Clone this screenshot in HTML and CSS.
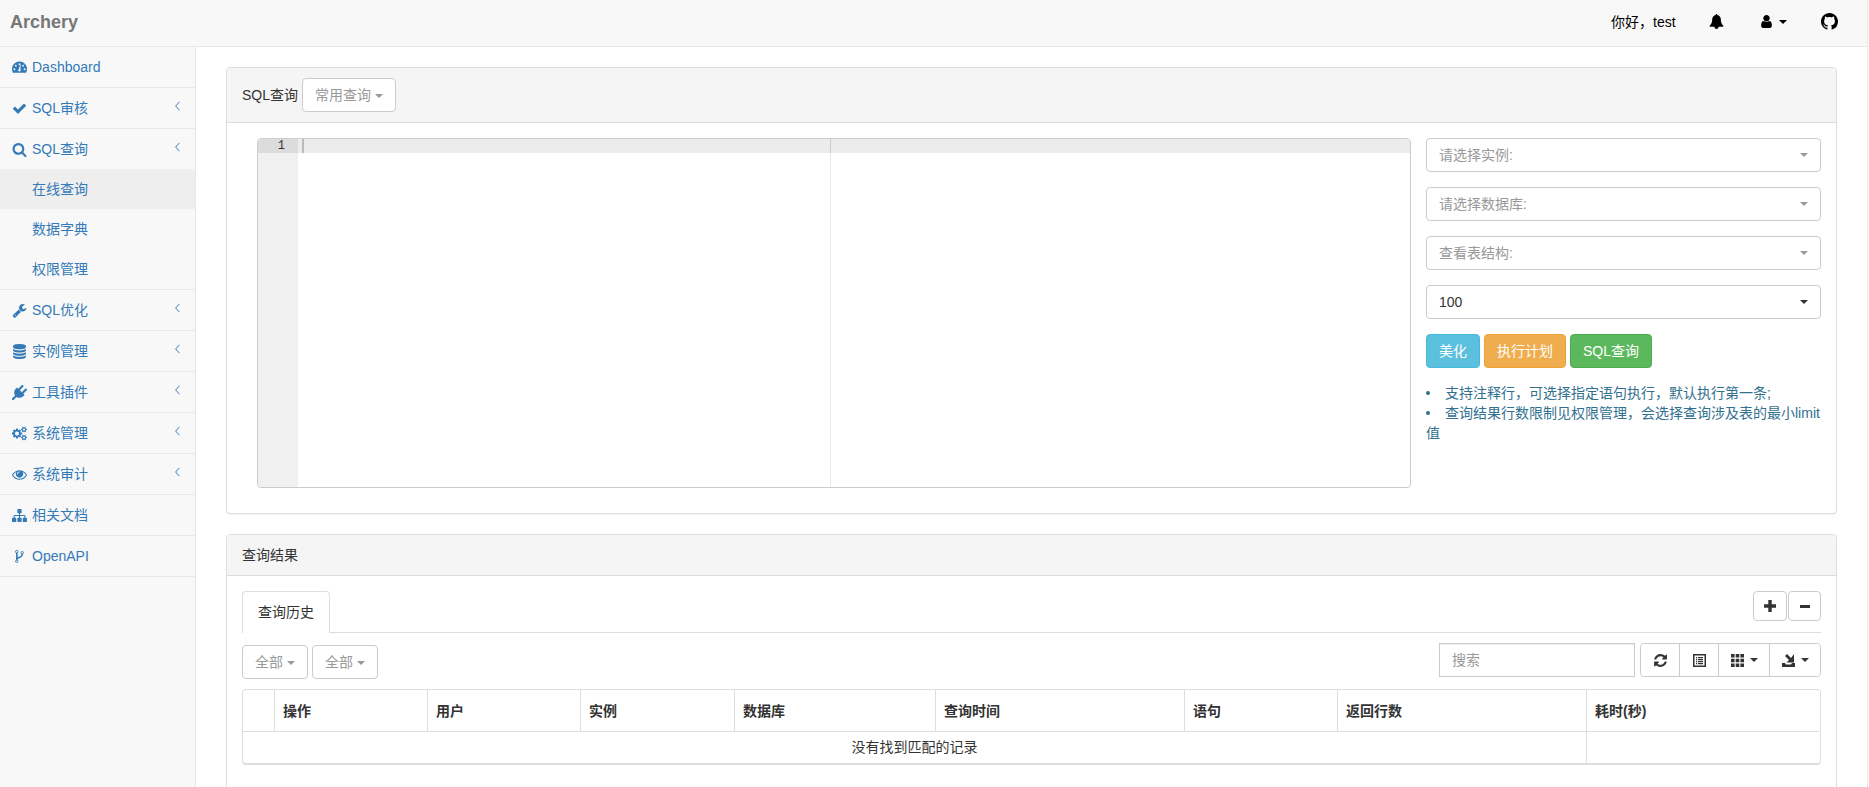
FILE: index.html
```html
<!DOCTYPE html>
<html lang="zh">
<head>
<meta charset="utf-8">
<title>Archery</title>
<link rel="stylesheet" href="styles.css">
</head>
<body>
<svg class="defs" width="0" height="0">
  <symbol id="i-dashboard" viewBox="0 0 1792 1792"><path d="M896 192q-244 0-450 120T120 638 0 1088q0 213 90 400l40 48h1532l40-48q90-187 90-400 0-244-120-450t-326-326-450-120zM288 1216a112 112 0 1 1 0-224 112 112 0 0 1 0 224zm168-432a112 112 0 1 1 0-224 112 112 0 0 1 0 224zm440-176a112 112 0 1 1 0-224 112 112 0 0 1 0 224zm110 520q40 30 40 90a150 150 0 1 1-210-137l120-470 q10-40 50-30 40 10 30 50zm330-344a112 112 0 1 1 0-224 112 112 0 0 1 0 224zm168 432a112 112 0 1 1 0-224 112 112 0 0 1 0 224z"/></symbol>
  <symbol id="i-check" viewBox="0 0 1792 1792"><path d="M1671 566q0 40-28 68l-724 724-136 136q-28 28-68 28t-68-28l-136-136-362-362q-28-28-28-68t28-68l136-136q28-28 68-28t68 28l294 295 656-657q28-28 68-28t68 28l136 136q28 28 28 68z"/></symbol>
  <symbol id="i-search" viewBox="0 0 1792 1792"><path d="M1216 832q0-185-131.500-316.500T768 384 451.500 515.500 320 832t131.500 316.500T768 1280t316.500-131.500T1216 832zm512 832q0 52-38 90t-90 38q-54 0-90-38l-343-342q-179 124-399 124-143 0-273.500-55.500t-225-150-150-225T64 832t55.500-273.500 150-225 225-150T768 128t273.500 55.500 225 150 150 225T1472 832q0 220-124 399l343 343q37 37 37 90z"/></symbol>
  <symbol id="i-wrench" viewBox="0 0 1792 1792"><path d="M448 1472q0-26-19-45t-45-19-45 19-19 45 19 45 45 19 45-19 19-45zm644-420l-682 682q-37 37-90 37-52 0-91-37l-106-108q-38-36-38-90 0-53 38-91l681-681q39 98 114.500 173.500T1092 1052zm634-435q0 39-23 106-47 134-164.500 217.500T1279 1024q-185 0-316.500-131.500T831 576t131.500-316.500T1279 128q58 0 121.500 16.500T1508 191q16 11 16 28t-16 28l-293 169v224l193 107q5-3 79-48.500t135.500-81T1692 582q15 0 23.500 10t8.500 25z"/></symbol>
  <symbol id="i-database" viewBox="0 0 1792 1792"><path d="M896 768q237 0 443-43t325-127v170q0 69-103 128t-280 93.500-385 34.500-385-34.500T231 896 128 768V598q119 84 325 127t443 43zm0 768q237 0 443-43t325-127v170q0 69-103 128t-280 93.500-385 34.500-385-34.500-280-93.500-103-128v-170q119 84 325 127t443 43zm0-384q237 0 443-43t325-127v170q0 69-103 128t-280 93.500-385 34.500-385-34.500-280-93.500-103-128V982q119 84 325 127t443 43zM896 0q208 0 385 34.500t280 93.500 103 128v128q0 69-103 128t-280 93.500T896 640t-385-34.500T231 512 128 384V256q0-69 103-128t280-93.500T896 0z"/></symbol>
  <symbol id="i-plug" viewBox="0 0 1792 1792"><path d="M1755 453q37 38 37 90.500t-37 90.500l-401 400 150 150-160 160q-163 163-389.500 186.500T543 1430l-362 362H0v-181l362-362q-124-185-100.500-411.500T448 448l160-160 150 150 400-401q38-37 91-37t90 37 37 90.500-37 90.500L939 619l234 234 401-400q38-37 91-37t90 37z"/></symbol>
  <symbol id="i-cogs" viewBox="0 0 1920 1792"><path d="M896 896q0-106-75-181t-181-75-181 75-75 181 75 181 181 75 181-75 75-181zm768 512q0-52-38-90t-90-38-90 38-38 90q0 53 37.500 90.500T1536 1536t90.500-37.500 37.500-90.500zm0-1024q0-52-38-90t-90-38-90 38-38 90q0 53 37.500 90.500T1536 512t90.500-37.500T1664 384zm-384 421v185q0 10-7 19.500t-16 10.500l-155 24q-11 35-32 76 34 48 90 115 7 11 7 20 0 12-7 19-23 30-82.500 89.500T999 1423q-11 0-21-7l-115-90q-37 19-77 31-11 108-23 155-7 24-30 24H547q-11 0-20-7.500t-10-17.500l-23-153q-34-10-75-31l-118 89q-7 7-20 7-11 0-21-8-144-133-144-160 0-9 7-19 10-14 41-53t47-61q-23-44-35-82l-152-24q-10-1-17-9.500T0 987V802q0-10 7-19.500T23 772l155-24q11-35 32-76-34-48-90-115-7-11-7-20 0-12 7-20 22-30 82-89t79-59q11 0 21 7l115 90q34-18 77-32 11-108 23-154 7-24 30-24h186q11 0 20 7.500t10 17.500l23 153q34 10 75 31l118-89q8-7 20-7 11 0 21 8 144 133 144 160 0 8-7 19-12 16-42 54t-45 60q23 48 34 82l152 23q10 2 17 10.500t7 19.500zm640 533v140q0 16-149 31-12 27-30 52 51 113 51 138 0 4-4 7-122 71-124 71-8 0-46-47t-52-68q-20 2-30 2t-30-2q-14 21-52 68t-46 47q-2 0-124-71-4-3-4-7 0-25 51-138-18-25-30-52-149-15-149-31v-140q0-16 149-31 13-29 30-52-51-113-51-138 0-4 4-7 4-2 35-20t59-34 30-16q8 0 46 46.500t52 67.500q20-2 30-2t30 2q51-71 92-112l6-2q4 0 124 70 4 3 4 7 0 25-51 138 17 23 30 52 149 15 149 31zm0-1024v140q0 16-149 31-12 27-30 52 51 113 51 138 0 4-4 7-122 71-124 71-8 0-46-47t-52-68q-20 2-30 2t-30-2q-14 21-52 68t-46 47q-2 0-124-71-4-3-4-7 0-25 51-138-18-25-30-52-149-15-149-31V314q0-16 149-31 13-29 30-52-51-113-51-138 0-4 4-7 4-2 35-20t59-34 30-16q8 0 46 46.500t52 67.500q20-2 30-2t30 2q51-71 92-112l6-2q4 0 124 70 4 3 4 7 0 25-51 138 17 23 30 52 149 15 149 31z"/></symbol>
  <symbol id="i-eye" viewBox="0 0 1792 1792"><path d="M1664 960q-152-236-381-353 61 104 61 225 0 185-131.500 316.500T896 1280t-316.500-131.500T448 832q0-121 61-225-229 117-381 353 133 205 333.500 326.500T896 1408t434.500-121.500T1664 960zM944 576q0-20-14-34t-34-14q-125 0-214.500 89.500T592 832q0 20 14 34t34 14 34-14 14-34q0-86 61-147t147-61q20 0 34-14t14-34zm848 384q0 34-20 69-140 230-376.500 368.500T896 1536t-499.500-139T20 1029q-20-35-20-69t20-69q140-229 376.500-368T896 384t499.500 139T1772 891q20 35 20 69z"/></symbol>
  <symbol id="i-sitemap" viewBox="0 0 1792 1792"><path d="M1792 1248v320q0 40-28 68t-68 28h-320q-40 0-68-28t-28-68v-320q0-40 28-68t68-28h96v-192H960v192h96q40 0 68 28t28 68v320q0 40-28 68t-68 28H736q-40 0-68-28t-28-68v-320q0-40 28-68t68-28h96V960H320v192h96q40 0 68 28t28 68v320q0 40-28 68t-68 28H96q-40 0-68-28t-28-68v-320q0-40 28-68t68-28h96V960q0-52 38-90t90-38h512V640h-96q-40 0-68-28t-28-68V224q0-40 28-68t68-28h320q40 0 68 28t28 68v320q0 40-28 68t-68 28h-96v192h512q52 0 90 38t38 90v192h96q40 0 68 28t28 68z"/></symbol>
  <symbol id="i-fork" viewBox="0 0 1792 1792"><path d="M672 1472q0-40-28-68t-68-28-68 28-28 68 28 68 68 28 68-28 28-68zm0-1152q0-40-28-68t-68-28-68 28-28 68 28 68 68 28 68-28 28-68zm640 128q0-40-28-68t-68-28-68 28-28 68 28 68 68 28 68-28 28-68zm96 0q0 52-26 96.500T1312 614q-2 287-226 414-67 38-203 81-128 40-169.500 71T672 1280v26q45 26 70.500 70.500T768 1472q0 80-56 136t-136 56-136-56-56-136q0-52 26-96.500t70-70.500V486q-45-26-70.500-70.500T384 320q0-80 56-136t136-56 136 56 56 136q0 52-26 96.500T672 486v497q54-26 154-57 55-17 87.500-29.500t70.500-31 59-39.500 40.500-51 28-69.500 8.500-91.500q-45-26-70.500-70.500T1024 448q0-80 56-136t136-56 136 56 56 136z"/></symbol>
  <symbol id="i-bell" viewBox="0 0 1792 1792"><path d="M1664 1344q0 52-38 90t-90 38h-448q0 106-75 181t-181 75-181-75-75-181H128q-52 0-90-38T0 1344q50-42 91-88t85-119.500 74.500-158.500 50-206T320 512q0-152 117-282.500T744 65q-8-18-8-37 0-40 28-68t68-28 68 28 28 68q0 19-8 37 190 34 307 164.500T1344 512q0 117 19.500 260t50 206 74.500 158.500 85 119.500 91 88z" transform="translate(64 64)"/></symbol>
  <symbol id="i-user" viewBox="0 0 1792 1792"><path d="M1536 1399q0 109-62.500 187t-150.500 78H469q-88 0-150.500-78T256 1399q0-85 8.500-160.500t31.500-152 58.500-131 94-89T583 832q131 128 313 128t313-128q76 0 134.500 34.500t94 89 58.500 131 31.500 152 8.500 160.500zm-256-887q0 159-112.500 271.500T896 896 624.500 783.500 512 512t112.500-271.500T896 128t271.500 112.500T1280 512z"/></symbol>
  <symbol id="i-github" viewBox="0 0 16 16"><path d="M8 0C3.580 0 0 3.580 0 8c0 3.540 2.290 6.530 5.470 7.590.4.070.55-.17.55-.38 0-.19-.01-.82-.01-1.490-2.010.37-2.530-.49-2.690-.94-.09-.23-.48-.94-.82-1.130-.28-.15-.68-.52-.01-.53.630-.01 1.080.58 1.230.82.720 1.210 1.870.87 2.330.66.070-.52.280-.87.510-1.070-1.780-.2-3.640-.89-3.640-3.950 0-.87.310-1.590.820-2.150-.08-.2-.36-1.020.08-2.120 0 0 .67-.21 2.200.82.640-.18 1.320-.27 2-.27s1.360.09 2 .27c1.530-1.040 2.200-.82 2.200-.82.440 1.100.16 1.920.08 2.120.51.560.82 1.270.82 2.150 0 3.070-1.870 3.750-3.650 3.950.29.250.54.730.54 1.480 0 1.070-.01 1.930-.01 2.200 0 .21.150.46.550.38A8.010 8.010 0 0 0 16 8c0-4.420-3.580-8-8-8z"/></symbol>
  <symbol id="i-refresh" viewBox="0 0 1792 1792"><path d="M1639 1056q0 5-1 7-64 268-268 434.500T892 1664q-146 0-282.500-55T366 1452l-129 129q-19 19-45 19t-45-19-19-45v-448q0-26 19-45t45-19h448q26 0 45 19t19 45-19 45l-137 137q71 66 161 102t187 36q134 0 250-65t186-179q11-17 53-117 8-23 30-23h192q13 0 22.500 9.500t9.500 22.500zm25-800v448q0 26-19 45t-45 19h-448q-26 0-45-19t-19-45 19-45l138-138q-148-137-349-137-134 0-250 65T460 628q-11 17-53 117-8 23-30 23H178q-13 0-22.500-9.500T146 736v-7q65-268 270-434.500T896 128q146 0 284 55.500T1425 340l130-129q19-19 45-19t45 19 19 45z"/></symbol>
  <symbol id="i-list" viewBox="0 0 13 13"><path fill-rule="evenodd" d="M0 0h13v13H0zM1.500 1.500v10h10v-10zM3 3h1.200v1.200H3zM5 3h5v1.200H5zM3 5h1.200v1.200H3zM5 5h5v1.200H5zM3 7h1.200v1.200H3zM5 7h5v1.200H5zM3 9h1.200v1.200H3zM5 9h5v1.200H5z"/></symbol>
  <symbol id="i-th" viewBox="0 0 13 13"><path d="M0 0h3.600v3.600H0zM4.700 0h3.600v3.600H4.700zM9.400 0H13v3.600H9.400zM0 4.700h3.600v3.600H0zM4.700 4.700h3.600v3.600H4.700zM9.400 4.700H13v3.600H9.400zM0 9.400h3.600V13H0zM4.700 9.400h3.600V13H4.700zM9.400 9.400H13V13H9.400z"/></symbol>
  <symbol id="i-export" viewBox="0 0 13 13"><path d="M0 9h3l1 1.500h5l1-1.500h3v4H0zM12 0v8.500H4.500L7 6 3 2l2-2 4 4 3-4z"/></symbol>
  <symbol id="i-angle" viewBox="0 0 10 16"><path d="M7.500 2.500 2.500 8l5 5.500" fill="none" stroke="currentColor" stroke-width="1.300"/></symbol>
  <symbol id="i-plus" viewBox="0 0 12 12"><path d="M4.300 0h3.400v4.300H12v3.400H7.700V12H4.300V7.700H0V4.300h4.300z"/></symbol>
  <symbol id="i-minus" viewBox="0 0 10 3"><path d="M0 0h10v3H0z"/></symbol>
</svg>

<div class="page">
<nav class="topbar">
  <span class="brand">Archery</span>
  <div class="top-right">
    <span class="hello">你好，test</span>
    <svg class="ti ti-bell"><use href="#i-bell"/></svg>
    <span class="user-menu"><svg class="ti ti-user"><use href="#i-user"/></svg><i class="caret caret-black"></i></span>
    <svg class="ti ti-gh"><use href="#i-github"/></svg>
  </div>
</nav>

<div class="shell">
  <aside class="sidebar">
    <a class="nav-row"><svg class="ni"><use href="#i-dashboard"/></svg>Dashboard</a>
    <a class="nav-row"><svg class="ni"><use href="#i-check"/></svg>SQL审核<svg class="arrow"><use href="#i-angle"/></svg></a>
    <div class="nav-group">
      <a class="nav-row plain"><svg class="ni"><use href="#i-search"/></svg>SQL查询<svg class="arrow"><use href="#i-angle"/></svg></a>
      <a class="nav-sub active">在线查询</a>
      <a class="nav-sub">数据字典</a>
      <a class="nav-sub">权限管理</a>
    </div>
    <a class="nav-row"><svg class="ni"><use href="#i-wrench"/></svg>SQL优化<svg class="arrow"><use href="#i-angle"/></svg></a>
    <a class="nav-row"><svg class="ni"><use href="#i-database"/></svg>实例管理<svg class="arrow"><use href="#i-angle"/></svg></a>
    <a class="nav-row"><svg class="ni"><use href="#i-plug"/></svg>工具插件<svg class="arrow"><use href="#i-angle"/></svg></a>
    <a class="nav-row"><svg class="ni"><use href="#i-cogs"/></svg>系统管理<svg class="arrow"><use href="#i-angle"/></svg></a>
    <a class="nav-row"><svg class="ni"><use href="#i-eye"/></svg>系统审计<svg class="arrow"><use href="#i-angle"/></svg></a>
    <a class="nav-row"><svg class="ni"><use href="#i-sitemap"/></svg>相关文档</a>
    <a class="nav-row"><svg class="ni"><use href="#i-fork"/></svg>OpenAPI</a>
  </aside>

  <main class="content">
    <section class="panel panel-query">
      <header class="panel-head head-query">
        <span>SQL查询</span>
        <button class="btn btn-muted">常用查询<i class="caret"></i></button>
      </header>
      <div class="query-body">
        <div class="editor">
          <div class="gutter"><div class="gutter-line">1</div></div>
          <div class="code">
            <div class="active-line"><i class="cursor"></i></div>
            <i class="margin"></i>
          </div>
        </div>
        <div class="controls">
          <div class="select placeholder"><span>请选择实例:</span><i class="caret"></i></div>
          <div class="select placeholder"><span>请选择数据库:</span><i class="caret"></i></div>
          <div class="select placeholder"><span>查看表结构:</span><i class="caret"></i></div>
          <div class="select"><span>100</span><i class="caret caret-dark"></i></div>
          <div class="actions">
            <button class="btn btn-info">美化</button>
            <button class="btn btn-warning">执行计划</button>
            <button class="btn btn-success">SQL查询</button>
          </div>
          <div class="notes">
            <p><i class="dot"></i>支持注释行，可选择指定语句执行，默认执行第一条;</p>
            <p><i class="dot"></i>查询结果行数限制见权限管理，会选择查询涉及表的最小limit值</p>
          </div>
        </div>
      </div>
    </section>

    <section class="panel panel-result">
      <header class="panel-head head-result">查询结果</header>
      <div class="result-body">
        <div class="tabs">
          <span class="tab">查询历史</span>
          <div class="tab-tools">
            <button class="btn btn-square btn-plus"><svg class="sq-plus"><use href="#i-plus"/></svg></button>
            <button class="btn btn-square"><svg class="sq-minus"><use href="#i-minus"/></svg></button>
          </div>
        </div>
        <div class="toolbar">
          <div class="filters">
            <button class="btn btn-muted">全部<i class="caret"></i></button>
            <button class="btn btn-muted">全部<i class="caret"></i></button>
          </div>
          <div class="toolbar-right">
            <input class="search" type="text" placeholder="搜索">
            <div class="btn-group">
              <button class="gbtn g-a"><svg class="gi gi-refresh"><use href="#i-refresh"/></svg></button>
              <button class="gbtn g-a"><svg class="gi"><use href="#i-list"/></svg></button>
              <button class="gbtn g-b"><svg class="gi"><use href="#i-th"/></svg><i class="caret caret-dark"></i></button>
              <button class="gbtn g-c"><svg class="gi"><use href="#i-export"/></svg><i class="caret caret-dark"></i></button>
            </div>
          </div>
        </div>
        <div class="table-wrap">
          <table class="grid">
            <colgroup>
              <col class="c0"><col class="c1"><col class="c2"><col class="c3"><col class="c4"><col class="c5"><col class="c6"><col class="c7"><col class="c8">
            </colgroup>
            <thead>
              <tr><th></th><th>操作</th><th>用户</th><th>实例</th><th>数据库</th><th>查询时间</th><th>语句</th><th>返回行数</th><th>耗时(秒)</th></tr>
            </thead>
            <tbody>
              <tr><td class="empty" colspan="8">没有找到匹配的记录</td><td></td></tr>
            </tbody>
          </table>
        </div>
      </div>
    </section>
  </main>
</div>
</div>
</body>
</html>
```
FILE: styles.css
```css
* { box-sizing: border-box; }
html, body { margin: 0; height: 787px; overflow: hidden; background: #fff; }
body {
  font-family: "Liberation Sans", "Noto Sans CJK SC", sans-serif;
  font-size: 14px;
  line-height: 20px;
  color: #333;
  padding-right: 1px;
}
.page { height: 787px; border-right: 1px solid #e7e7e7; }
.defs { position: absolute; }
svg { fill: currentColor; }

.topbar {
  height: 47px;
  display: flex;
  align-items: center;
  justify-content: space-between;
  background: #f8f8f8;
  border-bottom: 1px solid #e7e7e7;
  padding: 0 0 3px 10px;
}
.brand { font-size: 18px; font-weight: 700; color: #777; }
.top-right { display: flex; align-items: center; color: #000; }
.hello { width: 98px; font-size: 14px; }
.ti { display: block; }
.ti-bell { width: 15px; height: 15px; margin-right: 35px; }
.user-menu { display: flex; align-items: center; width: 62px; }
.ti-user { width: 15px; height: 15px; margin-right: 1px; }
.ti-gh { width: 17px; height: 17px; margin-right: 29px; }

.shell { display: flex; height: 740px; overflow: hidden; }
.sidebar {
  width: 196px;
  flex: none;
  background: #f8f8f8;
  border-right: 1px solid #e7e7e7;
  color: #337ab7;
}
.nav-row {
  position: relative;
  display: flex;
  align-items: center;
  height: 41px;
  padding: 0 15px 0 12px;
  border-bottom: 1px solid #e7e7e7;
}
.nav-row.plain { height: 40px; border-bottom: none; }
.nav-group { border-bottom: 1px solid #e7e7e7; }
.nav-sub { display: flex; align-items: center; height: 40px; padding-left: 32px; }
.nav-sub.active { background: #eee; }
.ni { width: 15px; height: 15px; margin-right: 5px; flex: none; }
.arrow { position: absolute; right: 13px; top: 12px; width: 9px; height: 12px; }

.content { flex: 1; min-width: 0; padding: 20px 30px 0; }
.panel {
  border: 1px solid #ddd;
  border-radius: 4px;
  box-shadow: 0 1px 1px rgba(0,0,0,.05);
  background: #fff;
}
.panel-query { height: 447px; margin-bottom: 20px; }
.panel-result { height: 270px; }
.panel-head {
  background: #f5f5f5;
  border-bottom: 1px solid #ddd;
  border-radius: 3px 3px 0 0;
  padding: 10px 15px;
  color: #333;
}
.head-query { height: 55px; display: flex; align-items: center; gap: 4px; }
.head-result { height: 41px; }

.btn {
  font: inherit;
  height: 34px;
  padding: 0 12px;
  border: 1px solid #ccc;
  border-radius: 4px;
  background: #fff;
  color: #333;
  white-space: nowrap;
}
.btn-muted { color: #999; }
.btn-info { background: #5bc0de; border-color: #46b8da; color: #fff; }
.btn-warning { background: #f0ad4e; border-color: #eea236; color: #fff; }
.btn-success { background: #5cb85c; border-color: #4cae4c; color: #fff; }
.caret {
  display: inline-block;
  width: 0; height: 0;
  margin-left: 4px;
  vertical-align: middle;
  border-top: 4px solid #999;
  border-left: 4px solid transparent;
  border-right: 4px solid transparent;
}
.caret-dark { border-top-color: #333; }
.caret-black { border-top-color: #000; }

.query-body { display: flex; padding: 15px 15px 0 30px; }
.editor {
  width: 1154px;
  height: 350px;
  flex: none;
  display: flex;
  border: 1px solid #ccc;
  border-radius: 4px;
  overflow: hidden;
  margin-right: 15px;
}
.gutter { width: 40px; background: #f0f0f0; font: 12px/14px "Liberation Mono", monospace; color: #333; }
.gutter-line { height: 14px; background: #dcdcdc; text-align: right; padding-right: 13px; }
.code { flex: 1; position: relative; }
.active-line { height: 14px; background: #ececec; }
.cursor { display: block; width: 2px; height: 14px; margin-left: 4px; background: #bbb; }
.margin { position: absolute; left: 532px; top: 0; bottom: 0; width: 1px; background: linear-gradient(#ccc 14px, #e8e8e8 14px); }

.controls { flex: 1; min-width: 0; }
.select {
  height: 34px;
  display: flex;
  align-items: center;
  justify-content: space-between;
  padding: 0 12px;
  margin-bottom: 15px;
  border: 1px solid #ccc;
  border-radius: 4px;
  background: #fff;
  color: #333;
}
.select.placeholder { color: #999; }
.actions { display: flex; gap: 4px; margin-bottom: 15px; }
.notes { color: #31708f; font-size: 14px; }
.notes p { margin: 0; }
.dot {
  display: inline-block;
  width: 4px; height: 4px;
  border-radius: 50%;
  background: #31708f;
  margin: 0 15px 2px 0;
  vertical-align: middle;
}

.result-body { padding: 15px; }
.tabs {
  position: relative;
  display: flex;
  justify-content: space-between;
  height: 42px;
  border-bottom: 1px solid #ddd;
}
.tab {
  height: 42px;
  padding: 10px 15px;
  background: #fff;
  border: 1px solid #ddd;
  border-bottom: none;
  border-radius: 4px 4px 0 0;
}
.tab-tools { display: flex; gap: 1px; height: 30px; }
.btn-square {
  display: flex; align-items: center; justify-content: center;
  width: 33px; height: 30px; padding: 0;
  color: #333;
}
.btn-plus { width: 34px; }
.sq-plus { width: 12px; height: 12px; }
.sq-minus { width: 10px; height: 3px; }
.toolbar { display: flex; justify-content: space-between; margin-top: 12px; margin-bottom: 10px; }
.filters { display: flex; gap: 4px; }
.toolbar-right { display: flex; gap: 5px; margin-top: -2px; height: 34px; }
.search {
  width: 196px; height: 34px;
  padding: 0 12px;
  font: inherit;
  color: #555;
  border: 1px solid #ccc;
  box-shadow: inset 0 1px 1px rgba(0,0,0,.075);
  outline: none;
}
.search::placeholder { color: #999; }
.btn-group { display: flex; border: 1px solid #ccc; border-radius: 4px; height: 34px; }
.gbtn {
  display: flex; align-items: center; justify-content: center;
  height: 32px; padding: 0;
  background: #fff; border: none; border-right: 1px solid #ccc; color: #333;
  font: inherit;
}
.gbtn .caret { margin-left: 6px; }
.gbtn:first-child { border-radius: 4px 0 0 4px; }
.g-a { width: 39px; }
.g-b { width: 51px; }
.g-c { width: 50px; border-right: none; border-radius: 0 4px 4px 0; }
.gi { width: 13px; height: 13px; }
.gi-refresh { width: 15px; height: 15px; }

.table-wrap { border: 1px solid #ddd; border-bottom-width: 2px; border-radius: 4px; padding-right: 1px; }
.grid { width: 100%; border-collapse: separate; border-spacing: 0; table-layout: fixed; }
.c0 { width: 31px; } .c1 { width: 153px; } .c2 { width: 153px; } .c3 { width: 154px; }
.c4 { width: 201px; } .c5 { width: 249px; } .c6 { width: 153px; } .c7 { width: 249px; }
.grid th {
  height: 42px;
  padding: 0 8px;
  text-align: left;
  font-weight: 700;
  color: #333;
  border-left: 1px solid #ddd;
  border-bottom: 1px solid #ddd;
}
.grid th:first-child { border-left: none; }
.grid td { height: 31px; padding: 0 0 2px; text-align: center; }
.grid td:last-child { border-left: 1px solid #ddd; }
```
